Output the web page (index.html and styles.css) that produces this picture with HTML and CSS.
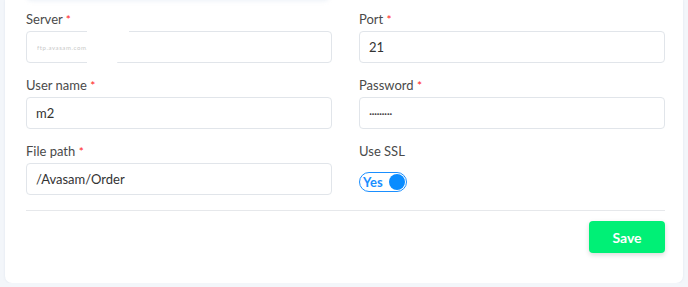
FILE: index.html
```html
<!DOCTYPE html>
<html lang="en">
<head>
    <meta charset="UTF-8">
    <meta name="viewport" content="width=device-width, initial-scale=1.0">
    <title>FTP settings</title>
    <link rel="stylesheet" href="styles.css">
</head>
<body>
    <div class="card">
        <div class="top-panel"></div>
        <div class="form-grid">
            <div class="field">
                <label class="label">Server <span class="req">*</span></label>
                <div class="input-wrap">
                    <input class="input input-faint" type="text" value="ftp.avasam.com.uk">
                    <div class="redact"></div>
                </div>
            </div>
            <div class="field">
                <label class="label">Port <span class="req">*</span></label>
                <input class="input" type="text" value="21">
            </div>
            <div class="field">
                <label class="label">User name <span class="req">*</span></label>
                <input class="input" type="text" value="m2">
            </div>
            <div class="field">
                <label class="label">Password <span class="req">*</span></label>
                <input class="input input-dots" type="text" value="·········">
            </div>
            <div class="field">
                <label class="label">File path <span class="req">*</span></label>
                <input class="input" type="text" value="/Avasam/Order">
            </div>
            <div class="field">
                <label class="label">Use SSL</label>
                <button class="toggle" type="button">
                    <span class="toggle-text">Yes</span>
                    <span class="toggle-knob"></span>
                </button>
            </div>
        </div>
        <div class="divider"></div>
        <div class="actions">
            <button class="save-button" type="button">Save</button>
        </div>
    </div>
</body>
</html>
```

FILE: styles.css
```css
body {
    margin: 0;
    background-color: #f3f6fa;
    font-family: Lato, 'Open Sans', sans-serif;
    color: #3d3d3d;
}
.card {
    width: 678px;
    margin-left: 5px;
    background-color: #fff;
    border-radius: 0 0 7px 7px;
    box-sizing: border-box;
    padding: 9px 18px 30px 21px;
    box-shadow: 0 0 2px rgba(200, 210, 225, 0.5);
}
.top-panel {
    width: 304px;
    height: 20px;
    margin: -29px 0 9px 0;
    background-color: #fff;
    border-radius: 6px;
    box-shadow: 0 1px 4px rgba(180, 200, 225, 0.25);
}
.form-grid {
    display: grid;
    grid-template-columns: 306px 306px;
    column-gap: 27px;
    row-gap: 12px;
}
.field {
    display: flex;
    flex-direction: column;
}
.label {
    font-size: 13px;
    line-height: 20px;
    height: 20px;
    margin-bottom: 2px;
    color: #4a4a4a;
}
.req {
    color: #ff1a1a;
    font-size: 12px;
}
.input-wrap {
    position: relative;
}
.input {
    display: block;
    width: 100%;
    height: 32px;
    box-sizing: border-box;
    border: 1px solid #e1e5ea;
    border-radius: 4px;
    padding: 0 9px;
    font-family: Lato, 'Open Sans', sans-serif;
    font-size: 13px;
    color: #333;
    background-color: #fff;
    outline: none;
}
.input-faint {
    font-size: 6px;
    color: #c8c8c8;
    padding-left: 10px;
    letter-spacing: 0.6px;
}
.input-dots {
    font-size: 12px;
    letter-spacing: -0.6px;
    color: #444;
}
.redact {
    position: absolute;
    left: 61px;
    top: -3px;
    width: 42px;
    height: 36px;
    background-color: #fff;
    clip-path: polygon(0 0, 100% 0, 100% 86%, 72% 86%, 72% 100%, 0 100%);
}
.toggle {
    margin-top: 9px;
    width: 48px;
    height: 20px;
    box-sizing: border-box;
    border: 1px solid #1a8fff;
    border-radius: 10px;
    background-color: #fff;
    padding: 0 1px 0 3px;
    display: flex;
    align-items: center;
    justify-content: space-between;
    cursor: pointer;
}
.toggle-text {
    font-family: Lato, 'Open Sans', sans-serif;
    font-size: 13px;
    font-weight: bold;
    color: #1a8fff;
}
.toggle-knob {
    width: 16px;
    height: 16px;
    border-radius: 50%;
    background-color: #0a8cff;
}
.divider {
    height: 1px;
    background-color: #e6e8eb;
    margin-top: 15px;
    width: 639px;
}
.actions {
    display: flex;
    justify-content: flex-end;
    margin-top: 10px;
    width: 639px;
}
.save-button {
    width: 76px;
    height: 32px;
    border: none;
    border-radius: 4px;
    background-color: #00f076;
    color: #fff;
    font-family: Lato, 'Open Sans', sans-serif;
    font-size: 14px;
    font-weight: bold;
    cursor: pointer;
    box-shadow: 0 2px 5px rgba(0, 0, 0, 0.15);
}
```
